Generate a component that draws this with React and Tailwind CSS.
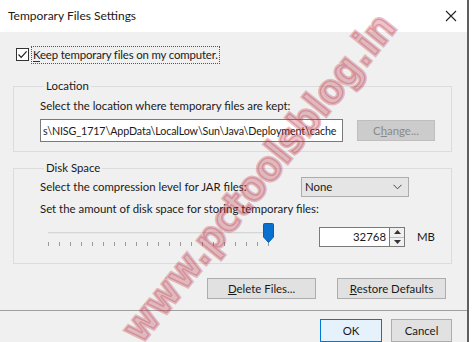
export default function App() {
  const ticks = Array.from({ length: 21 }, (_, i) => i);
  return (
    <div className="w-[474px] h-[342px] relative overflow-hidden bg-white flex font-['Lato',sans-serif] text-[11.4px] leading-[16px] text-[#1a1a1a]">
      <div className="w-[467px] flex flex-col">
        <div className="h-[32px] shrink-0 bg-white flex items-center justify-between pl-[8px] pr-[10px]">
          <span className="text-[12px]">Temporary Files Settings</span>
          <svg width="12" height="12" viewBox="0 0 12 12" className="text-[#222]">
            <path d="M1 1 L11 11 M11 1 L1 11" stroke="currentColor" strokeWidth="1.1" fill="none" />
          </svg>
        </div>
        <div className="flex-1 bg-[#f0f0f0] flex flex-col">
          <div className="mt-[14px] ml-[16px] flex items-center h-[17px]">
            <div className="w-[13px] h-[13px] border border-[#333] bg-white flex items-center justify-center">
              <svg width="11" height="11" viewBox="0 0 11 11">
                <path d="M1.5 5.5 L4.2 8.3 L9.6 2.4" stroke="#222" strokeWidth="1.2" fill="none" />
              </svg>
            </div>
            <span className="ml-[2px] px-[1px] border border-dotted border-[#555] tracking-[-0.15px]">
              <span className="underline underline-offset-2 decoration-[#333]">K</span>eep temporary files on my computer.
            </span>
          </div>

          <fieldset className="mt-[15px] ml-[13px] mr-[15px] border border-[#dcdcdc] pl-[26px] pr-[8px] pb-[9px]">
            <legend className="ml-[4px] px-[2px] leading-[16px]">Location</legend>
            <div className="mt-[4px]">Select the location where temporary files are kept:</div>
            <div className="mt-[5px] flex items-center">
              <div className="w-[303px] h-[23px] border border-[#7a7a7a] bg-white flex items-center px-[2px] overflow-hidden whitespace-nowrap text-[10.7px] tracking-[-0.1px]">
                s\NISG_1717\AppData\LocalLow\Sun\Java\Deployment\cache
              </div>
              <div className="ml-[14px] w-[78px] h-[21px] bg-[#cccccc] border border-[#bfbfbf] text-[#8a8a8a] flex items-center justify-center">
                C<span className="underline">h</span>ange...
              </div>
            </div>
          </fieldset>

          <fieldset className="mt-[8px] ml-[13px] mr-[15px] border border-[#dcdcdc] pl-[26px] pr-[8px] pb-[14px]">
            <legend className="ml-[4px] px-[2px] leading-[16px]">Disk Space</legend>
            <div className="mt-[1px] flex items-center h-[20px]">
              <span className="w-[261px]">Select the compression level for JAR files:</span>
              <div className="w-[108px] h-[20px] bg-[#e5e5e5] border border-[#adadad] flex items-center justify-between pl-[3px] pr-[6px]">
                <span>None</span>
                <svg width="9" height="6" viewBox="0 0 9 6">
                  <path d="M0.5 0.8 L4.5 4.8 L8.5 0.8" stroke="#444" strokeWidth="1" fill="none" />
                </svg>
              </div>
            </div>
            <div className="mt-[4px]">Set the amount of disk space for storing temporary files:</div>
            <div className="mt-[6px] flex items-start">
              <div className="relative ml-[4px] w-[236px] h-[26px] pt-[9px] pl-[4px]">
                <div className="h-[2px] w-[220px] bg-[#d6d6d6] border-b border-[#e8e8e8]"></div>
                <div className="mt-[8px] flex justify-between w-[221px]">
                  {ticks.map((t) => (
                    <div key={t} className="w-[1px] h-[4px] bg-[#9a9a9a]"></div>
                  ))}
                </div>
                <svg className="absolute left-[219px] top-[0px]" width="11" height="20" viewBox="0 0 11 20">
                  <path d="M0.5 1.5 Q0.5 0.5 1.5 0.5 L9.5 0.5 Q10.5 0.5 10.5 1.5 L10.5 14 L5.5 19.5 L0.5 14 Z" fill="#0a70d0" stroke="#0a5eb0" strokeWidth="1" />
                </svg>
              </div>
              <div className="ml-[39px] mt-[4px] flex items-center">
                <div className="w-[71px] h-[20px] border border-[#7a7a7a] bg-white flex items-center justify-end pr-[3px]">32768</div>
                <div className="w-[15px] h-[20px] border border-l-0 border-[#7a7a7a] bg-[#f0f0f0] flex flex-col">
                  <div className="flex-1 flex items-center justify-center border-b border-[#bbb]">
                    <svg width="7" height="4" viewBox="0 0 7 4"><path d="M0 4 L3.5 0 L7 4 Z" fill="#333" /></svg>
                  </div>
                  <div className="flex-1 flex items-center justify-center">
                    <svg width="7" height="4" viewBox="0 0 7 4"><path d="M0 0 L3.5 4 L7 0 Z" fill="#333" /></svg>
                  </div>
                </div>
                <span className="ml-[12px]">MB</span>
              </div>
            </div>
          </fieldset>

          <div className="mt-[14px] flex justify-end gap-[21px] pr-[21px]">
            <div className="w-[109px] h-[21px] bg-[#e1e1e1] border border-[#adadad] flex items-center justify-center">
              <span className="underline">D</span>elete Files...
            </div>
            <div className="w-[109px] h-[21px] bg-[#e1e1e1] border border-[#adadad] flex items-center justify-center">
              <span className="underline">R</span>estore Defaults
            </div>
          </div>
          <div className="mt-[11px] h-[1px] bg-[#a0a0a0]"></div>
          <div className="mt-[8px] flex justify-end gap-[9px] pr-[15px]">
            <div className="w-[62px] h-[23px] bg-[#e5f1fb] border border-[#0078d7] flex items-center justify-center">OK</div>
            <div className="w-[61px] h-[23px] bg-[#e1e1e1] border border-[#adadad] flex items-center justify-center">Cancel</div>
          </div>
        </div>
      </div>
      <div className="w-[2px] bg-[#5f5f5f]"></div>
      <div className="flex-1 bg-white"></div>

      <div className="absolute left-[259px] top-[178px] -translate-x-1/2 -translate-y-1/2 -rotate-[51deg] whitespace-nowrap pointer-events-none font-['Liberation_Sans_Narrow','DejaVu_Sans_Condensed',sans-serif] font-bold text-[41px] leading-[41px] text-[rgba(185,45,65,0.3)] [-webkit-text-stroke:3px_rgba(185,45,65,0.3)]">
        www.pctoolsblog.in
      </div>
    </div>
  );
}
